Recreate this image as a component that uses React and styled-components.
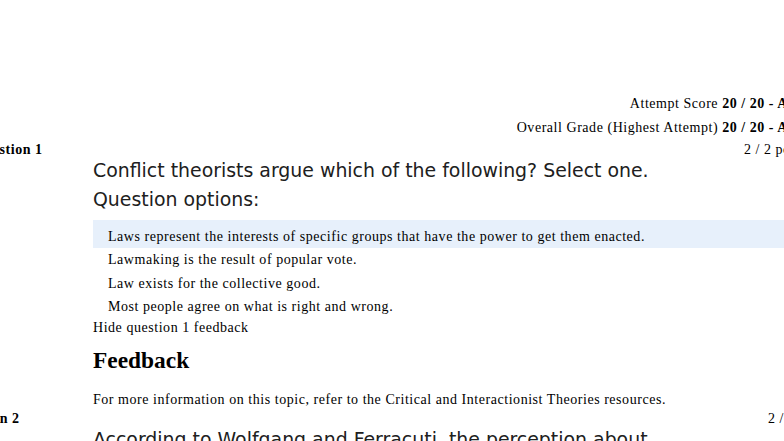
import React from "react";
import styled, { createGlobalStyle } from "styled-components";

const GlobalStyle = createGlobalStyle`
  html, body {
    margin: 0;
    padding: 0;
    overflow: hidden;
    background: #fff;
  }
  body {
    font-family: "Liberation Serif", "Times New Roman", serif;
    font-size: 14px;
    letter-spacing: 0.54px;
    color: #000;
  }
`;

// data
const questions = [
  {
    id: 1,
    labelIndent: 33,
    pointsRight: 67,
    text: "Conflict theorists argue which of the following? Select one.",
    options: [
      "Laws represent the interests of specific groups that have the power to get them enacted.",
      "Lawmaking is the result of popular vote.",
      "Law exists for the collective good.",
      "Most people agree on what is right and wrong.",
    ],
    selected: 0,
    feedback:
      "For more information on this topic, refer to the Critical and Interactionist Theories resources.",
  },
  {
    id: 2,
    labelIndent: 10,
    pointsRight: 43,
    text: "According to Wolfgang and Ferracuti, the perception about",
  },
];

function App() {
  return (
    <>
      <GlobalStyle />
      <Page>
        <Scores>
          <ScoreLine>
            Attempt Score <b>20 / 20 - A</b>
          </ScoreLine>
          <ScoreLine>
            Overall Grade (Highest Attempt) <b>20 / 20 - A</b>
          </ScoreLine>
        </Scores>

        {questions.map((q) => (
          <Question key={q.id}>
            {/* label + points */}
            <QuestionHeader $indent={q.labelIndent} $right={q.pointsRight}>
              <Label>Question {q.id}</Label>
              <Points>2 / 2 points</Points>
            </QuestionHeader>

            <QuestionBody>
              <QuestionText>{q.text}</QuestionText>
              {q.options && (
                <>
                  <OptionsTitle>Question options:</OptionsTitle>
                  <Options>
                    {q.options.map((opt, i) => (
                      <Option key={opt} $selected={i === q.selected}>
                        {opt}
                      </Option>
                    ))}
                  </Options>
                  <HideLink>Hide question {q.id} feedback</HideLink>
                  <FeedbackTitle>Feedback</FeedbackTitle>
                  <FeedbackText>{q.feedback}</FeedbackText>
                </>
              )}
            </QuestionBody>
          </Question>
        ))}
      </Page>
    </>
  );
}

// Styles
const Page = styled.div`
  margin-left: -60px;
  width: 940px;
  padding-top: 92px;
`;

const Scores = styled.div`
  text-align: right;
  padding-right: 92px;
`;

const ScoreLine = styled.div`
  line-height: 24px;

  b {
    font-weight: bold;
  }
`;

const Question = styled.section``;

const QuestionHeader = styled.div`
  display: flex;
  justify-content: space-between;
  padding: 0 ${(p) => p.$right}px 0 ${(p) => p.$indent}px;
  line-height: 20px;
  height: 20px;
`;

const Label = styled.span`
  font-weight: bold;
`;

const Points = styled.span``;

const QuestionBody = styled.div`
  padding-left: 153px;
`;

const QuestionText = styled.div`
  font-family: "DejaVu Sans", Verdana, sans-serif;
  font-size: 18.9px;
  letter-spacing: 0;
  line-height: 20px;
  color: #202020;
`;

const OptionsTitle = styled(QuestionText)`
  margin-top: 9px;
`;

const Options = styled.div`
  margin-top: 11px;
`;

const Option = styled.div`
  line-height: 23.5px;
  padding-left: 15px;
  padding-top: ${(p) => (p.$selected ? "4.5px" : "0")};
  background: ${(p) => (p.$selected ? "#e7f0fb" : "transparent")};
`;

const HideLink = styled.div`
  line-height: 17.5px;
`;

const FeedbackTitle = styled.h2`
  margin: 10px 0 0;
  font-size: 23.4px;
  letter-spacing: 0;
  line-height: 28px;
  font-weight: bold;
`;

const FeedbackText = styled.p`
  margin: 17px 0 0;
  line-height: 18px;
`;

export default App;
